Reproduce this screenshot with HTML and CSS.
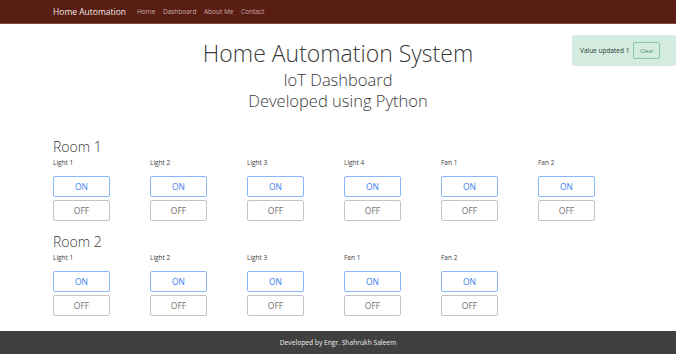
FILE: index.html
```html
<!DOCTYPE html>
<html>

<head>
    <title>Home Automation</title>
    <meta charset="UTF-8">
    <meta name="viewport" content="width=device-width, initial-scale=1.0">
    <link rel="stylesheet" href="styles.css">
</head>

<body>
    <div class="page">
        <nav class="navbar">
            <a class="brand" href="#">Home Automation</a>
            <ul>
                <li><a href="#">Home</a></li>
                <li><a href="#">Dashboard</a></li>
                <li><a href="#">About Me</a></li>
                <li><a href="#">Contact</a></li>
            </ul>
        </nav>

        <div class="toast">
            <span>Value updated 1</span>
            <button class="btn-clear">Clear</button>
        </div>

        <header class="title">
            <h1>Home Automation System</h1>
            <h3>IoT Dashboard</h3>
            <h3>Developed using Python</h3>
        </header>

        <section class="room">
            <h2>Room 1</h2>
            <div class="devices">
                <div class="device"><p>Light 1</p><button class="btn-on">ON</button><button class="btn-off">OFF</button></div>
                <div class="device"><p>Light 2</p><button class="btn-on">ON</button><button class="btn-off">OFF</button></div>
                <div class="device"><p>Light 3</p><button class="btn-on">ON</button><button class="btn-off">OFF</button></div>
                <div class="device"><p>Light 4</p><button class="btn-on">ON</button><button class="btn-off">OFF</button></div>
                <div class="device"><p>Fan 1</p><button class="btn-on">ON</button><button class="btn-off">OFF</button></div>
                <div class="device"><p>Fan 2</p><button class="btn-on">ON</button><button class="btn-off">OFF</button></div>
            </div>
        </section>

        <section class="room">
            <h2>Room 2</h2>
            <div class="devices">
                <div class="device"><p>Light 1</p><button class="btn-on">ON</button><button class="btn-off">OFF</button></div>
                <div class="device"><p>Light 2</p><button class="btn-on">ON</button><button class="btn-off">OFF</button></div>
                <div class="device"><p>Light 3</p><button class="btn-on">ON</button><button class="btn-off">OFF</button></div>
                <div class="device"><p>Fan 1</p><button class="btn-on">ON</button><button class="btn-off">OFF</button></div>
                <div class="device"><p>Fan 2</p><button class="btn-on">ON</button><button class="btn-off">OFF</button></div>
            </div>
        </section>

        <footer class="footer">Developed by Engr. Shahrukh Saleem</footer>
    </div>
</body>

</html>
```

FILE: styles.css
```css
body {
    margin: 0;
    padding: 0;
    background-color: white;
    font-family: "Open Sans", sans-serif;
    color: #3a3a3a;
}

.page {
    width: 676px;
    height: 354px;
    position: relative;
    display: flex;
    flex-direction: column;
}

.navbar {
    background-color: #581e14;
    height: 24px;
    border-bottom: 1px solid #7a4a40;
    box-sizing: border-box;
    display: flex;
    align-items: center;
    padding-left: 53px;
}

.brand {
    color: #f2e8e6;
    text-decoration: none;
    font-size: 8.5px;
    line-height: 12px;
    margin-right: 11px;
}

.navbar ul {
    list-style: none;
    margin: 0;
    padding: 0;
    display: flex;
    font-size: 6.5px;
    line-height: 12px;
}

.navbar li {
    margin-right: 7.5px;
}

.navbar li a {
    color: #c9aaa5;
    text-decoration: none;
}

.toast {
    position: absolute;
    top: 35px;
    left: 572px;
    width: 104px;
    height: 31px;
    box-sizing: border-box;
    background-color: #d4ebe0;
    border-radius: 3px;
    display: flex;
    align-items: center;
    padding-left: 8px;
    font-size: 6.5px;
    color: #2a3a33;
}

.btn-clear {
    margin-left: 4px;
    width: 27px;
    height: 17px;
    padding: 0;
    background: transparent;
    border: 1px solid #86c9ab;
    border-radius: 2px;
    font-family: inherit;
    font-size: 5.5px;
    color: #3f8f70;
}

.title {
    text-align: center;
    margin-top: 13px;
}

.title h1 {
    margin: 0;
    font-size: 23px;
    font-weight: 300;
    line-height: 32px;
}

.title h3 {
    margin: 0;
    font-size: 16.5px;
    font-weight: 300;
    line-height: 21px;
}

.room {
    padding-left: 53px;
}

.room h2 {
    margin: 0;
    font-size: 14px;
    font-weight: 300;
    line-height: 20px;
}

.devices {
    display: grid;
    grid-template-columns: repeat(6, 97px);
}

.device p {
    margin: 1px 0 9px;
    font-size: 6.5px;
    line-height: 9px;
}

.device button {
    display: block;
    width: 57px;
    height: 21px;
    margin-bottom: 3px;
    padding: 0;
    background: white;
    border-radius: 2px;
    font-family: inherit;
    font-size: 8.5px;
}

.btn-on {
    border: 1px solid #8ab6fb;
    color: #3d7ff0;
}

.btn-off {
    border: 1px solid #c4c4c4;
    color: #707070;
}

.room:first-of-type {
    margin-top: 26px;
}

.room + .room {
    margin-top: 8px;
}

.footer {
    margin-top: auto;
    height: 23px;
    background-color: #404040;
    color: #eeeeee;
    font-size: 6.7px;
    display: flex;
    align-items: center;
    justify-content: center;
}
```
